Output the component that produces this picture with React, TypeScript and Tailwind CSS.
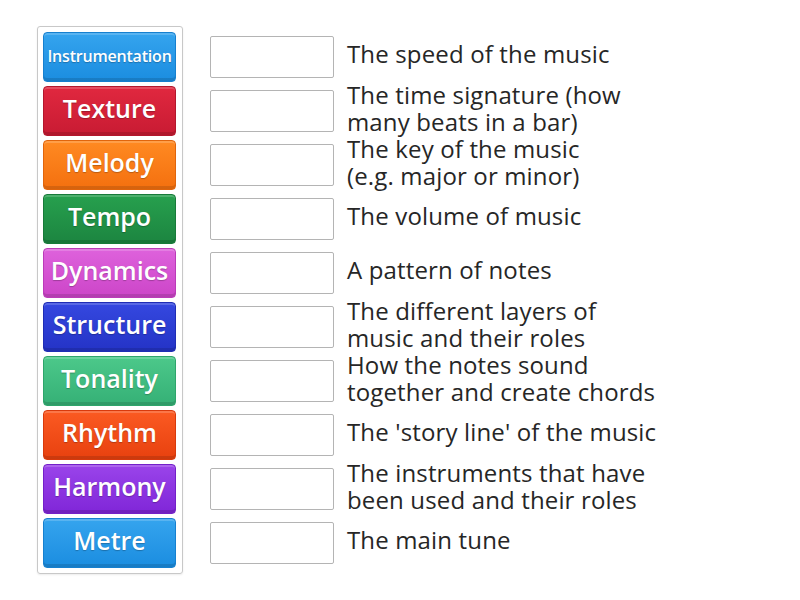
import React from "react";

const items: { label: string; from: string; to: string; border: string; small?: boolean }[] = [
  { label: "Instrumentation", from: "#35a4ee", to: "#1b8de0", border: "#1680cf", small: true },
  { label: "Texture", from: "#e0283f", to: "#c81b33", border: "#b3172d" },
  { label: "Melody", from: "#ff8a22", to: "#f4700f", border: "#e0650c" },
  { label: "Tempo", from: "#27a04e", to: "#1c8540", border: "#187a39" },
  { label: "Dynamics", from: "#de62dc", to: "#cc45c8", border: "#bb3bb8" },
  { label: "Structure", from: "#3548e0", to: "#2433c6", border: "#1f2db5" },
  { label: "Tonality", from: "#4cc88a", to: "#35b076", border: "#2ea56b" },
  { label: "Rhythm", from: "#fb5a22", to: "#e8410f", border: "#d83a0c" },
  { label: "Harmony", from: "#9a44ea", to: "#8026d8", border: "#7420c8" },
  { label: "Metre", from: "#35a4ee", to: "#1b8de0", border: "#1680cf" },
];

const defs: string[][] = [
  ["The speed of the music"],
  ["The time signature (how", "many beats in a bar)"],
  ["The key of the music", "(e.g. major or minor)"],
  ["The volume of music"],
  ["A pattern of notes"],
  ["The different layers of", "music and their roles"],
  ["How the notes sound", "together and create chords"],
  ["The 'story line' of the music"],
  ["The instruments that have", "been used and their roles"],
  ["The main tune"],
];

export default function App() {
  return (
    <div
      className="w-[800px] h-[600px] bg-white flex pt-[26px] pl-[37px]"
      style={{ fontFamily: '"Open Sans", "Noto Sans", sans-serif' }}
    >
      <div className="w-[146px] h-[548px] border border-[#c8c8c8] rounded-[3px] p-[5px] flex flex-col gap-[4px] shadow-[0_1px_2px_rgba(0,0,0,0.08)]">
        {items.map((it) => (
          <div
            key={it.label}
            className="h-[50px] w-[133px] rounded-[4px] flex items-center justify-center text-white font-semibold border"
            style={{
              background: `linear-gradient(to bottom, ${it.from}, ${it.to})`,
              borderColor: it.border,
              boxShadow: "inset 0 2px 0 rgba(255,255,255,0.18), inset 0 -3px 0 rgba(0,0,0,0.12)",
              textShadow: "0 1px 1px rgba(0,0,0,0.25)",
            }}
          >
            <span
              className={
                it.small
                  ? "text-[16px] leading-none -mt-[3px] tracking-[-0.2px]"
                  : "text-[25px] leading-none -mt-[5px]"
              }
            >
              {it.label}
            </span>
          </div>
        ))}
      </div>
      <div className="ml-[27px] pt-[6px] flex flex-col gap-[4px]">
        {defs.map((lines, i) => (
          <div key={i} className="h-[50px] flex items-center">
            <div className="w-[124px] h-[42px] border border-[#b4b4b4] rounded-[2px] bg-white shrink-0" />
            <div className="ml-[13px] text-[24px] leading-[27px] tracking-[0.15px] text-[#262626] whitespace-nowrap -mt-[7px]">
              {lines.map((l, j) => (
                <div key={j}>{l}</div>
              ))}
            </div>
          </div>
        ))}
      </div>
    </div>
  );
}
